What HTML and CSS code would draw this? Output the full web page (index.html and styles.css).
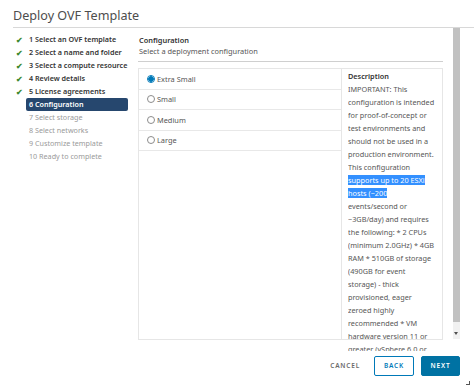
FILE: index.html
```html
<!DOCTYPE html>
<html lang="en">
<head>
    <meta charset="UTF-8">
    <title>Deploy OVF Template</title>
    <link rel="stylesheet" href="styles.css">
</head>
<body>
    <div class="wizard">
        <div class="wizard-title">Deploy OVF Template</div>

        <div class="wizard-body">
            <ul class="steps">
                <li class="done"><span class="check">&#10004;</span>1 Select an OVF template</li>
                <li class="done"><span class="check">&#10004;</span>2 Select a name and folder</li>
                <li class="done"><span class="check">&#10004;</span>3 Select a compute resource</li>
                <li class="done"><span class="check">&#10004;</span>4 Review details</li>
                <li class="done"><span class="check">&#10004;</span>5 License agreements</li>
                <li class="active">6 Configuration</li>
                <li>7 Select storage</li>
                <li>8 Select networks</li>
                <li>9 Customize template</li>
                <li>10 Ready to complete</li>
            </ul>

            <div class="page">
                <div class="page-head">
                    <div class="page-title">Configuration</div>
                    <div class="page-sub">Select a deployment configuration</div>
                </div>

                <div class="config">
                    <div class="options">
                        <label class="option"><span class="radio checked"></span>Extra Small</label>
                        <label class="option"><span class="radio"></span>Small</label>
                        <label class="option"><span class="radio"></span>Medium</label>
                        <label class="option"><span class="radio"></span>Large</label>
                    </div>
                    <div class="desc">
                        <div class="desc-title">Description</div>
                        <div class="desc-text">
                            IMPORTANT: This<br>
                            configuration is intended<br>
                            for proof-of-concept or<br>
                            test environments and<br>
                            should not be used in a<br>
                            production environment.<br>
                            This configuration<br>
                            <span class="sel">supports up to 20 ESXi </span><br>
                            <span class="sel">hosts (~200</span><br>
                            events/second or<br>
                            ~3GB/day) and requires<br>
                            the following: * 2 CPUs<br>
                            (minimum 2.0GHz) * 4GB<br>
                            RAM * 510GB of storage<br>
                            (490GB for event<br>
                            storage) - thick<br>
                            provisioned, eager<br>
                            zeroed highly<br>
                            recommended * VM<br>
                            hardware version 11 or<br>
                            greater (vSphere 6.0 or
                        </div>
                    </div>
                </div>
            </div>

            <div class="scrollbar">
                <div class="thumb"></div>
                <div class="arrow"></div>
            </div>
        </div>

        <div class="wizard-footer">
            <button class="btn btn-link">CANCEL</button>
            <button class="btn btn-outline">BACK</button>
            <button class="btn btn-primary">NEXT</button>
        </div>
        <div class="grip"></div>
    </div>
</body>
</html>
```

FILE: styles.css
```css
* {
    margin: 0;
    padding: 0;
    box-sizing: border-box;
}

body {
    background: #ffffff;
    font-family: "Noto Sans", "Open Sans", sans-serif;
    color: #565656;
}

.wizard {
    width: 474px;
    height: 389px;
    position: relative;
    display: flex;
    flex-direction: column;
}

.wizard-title {
    margin-left: 13px;
    padding-top: 7px;
    height: 28px;
    font-size: 12.6px;
    line-height: 18px;
    color: #4d4d4d;
    border-bottom: 1px solid #d8d8d8;
}

.wizard-body {
    display: flex;
    align-items: flex-start;
    height: 311px;
}

/* steps */
.steps {
    list-style: none;
    width: 138px;
    padding: 5px 0 0 16px;
}

.steps li {
    height: 13px;
    line-height: 13px;
    font-size: 7.2px;
    color: #9a9a9a;
    padding-left: 13px;
    white-space: nowrap;
    position: relative;
}

.steps li.done {
    color: #333333;
    font-weight: 600;
}

.steps .check {
    position: absolute;
    left: 0;
    top: 0;
    color: #3c8a2e;
    font-size: 8px;
}

.steps li.active {
    background: #26476e;
    color: #ffffff;
    font-weight: 600;
    margin-left: 10px;
    padding-left: 3px;
    border-radius: 2px;
    width: 102px;
}

/* main page */
.page {
    width: 305px;
    height: 323px;
    overflow: hidden;
    display: flex;
    flex-direction: column;
}

.page-head {
    padding-top: 7px;
    height: 34px;
    flex-shrink: 0;
    border-bottom: 1px solid #cfcfcf;
}

.page-title {
    font-size: 7.4px;
    font-weight: 600;
    color: #333333;
    line-height: 11px;
    padding-left: 1px;
}

.page-sub {
    font-size: 7.4px;
    color: #565656;
    line-height: 11px;
    padding-left: 1px;
}

.config {
    margin-top: 6px;
    height: 272px;
    flex-shrink: 0;
    display: flex;
    border: 1px solid #e6e6e6;
}

.options {
    width: 203px;
    border-right: 1px solid #e6e6e6;
}

.option {
    display: flex;
    align-items: center;
    height: 20.5px;
    border-bottom: 1px solid #e8e8e8;
    padding-left: 8px;
    font-size: 7.4px;
    color: #565656;
}

.radio {
    width: 8px;
    height: 8px;
    border: 1px solid #8c8c8c;
    border-radius: 50%;
    margin-right: 2px;
}

.radio.checked {
    border-color: #0079b8;
    background: radial-gradient(circle, #0079b8 0 2.5px, #ffffff 3px);
}

.desc {
    flex: 1;
    padding: 1px 0 0 6px;
    font-size: 7.3px;
    line-height: 13px;
    color: #565656;
    white-space: nowrap;
}

.desc-title {
    font-weight: 600;
    color: #333333;
}

.desc-text {
    height: 270px;
    overflow: hidden;
}

.sel {
    background: #3390ff;
    color: #ffffff;
}

/* scrollbar */
.scrollbar {
    width: 7px;
    height: 311px;
    margin-left: 10px;
    display: flex;
    flex-direction: column;
}

.thumb {
    flex: 1;
    background: #c1c1c1;
}

.arrow {
    height: 17px;
    background: #f1f1f1;
    position: relative;
}

.arrow::after {
    content: "";
    position: absolute;
    left: 1px;
    top: 10px;
    border-left: 2.5px solid transparent;
    border-right: 2.5px solid transparent;
    border-top: 3px solid #505050;
}

/* footer */
.wizard-footer {
    display: flex;
    justify-content: flex-end;
    align-items: center;
    gap: 7px;
    padding: 17px 14px 0 0;
}

.btn {
    height: 20px;
    line-height: 18px;
    padding: 0;
    text-align: center;
    font-family: "Noto Sans", "Open Sans", sans-serif;
    font-size: 6.5px;
    font-weight: 600;
    letter-spacing: 0.8px;
    border-radius: 2px;
    background: none;
    cursor: pointer;
}

.btn-link {
    border: none;
    color: #6a6a6a;
    padding: 0 4px;
    margin-right: 3px;
}

.btn-outline {
    width: 40px;
    border: 1px solid #0079b8;
    color: #0079b8;
    background: #ffffff;
}

.btn-primary {
    width: 39px;
    border: 1px solid #0072a3;
    background: #0072a3;
    color: #ffffff;
}

.grip {
    position: absolute;
    right: 4px;
    bottom: 4px;
    width: 4px;
    height: 4px;
    border-right: 1px solid #555;
    border-bottom: 1px solid #555;
}
```
